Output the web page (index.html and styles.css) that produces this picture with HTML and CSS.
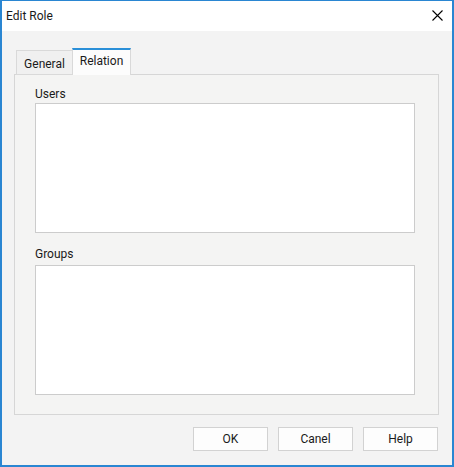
FILE: index.html
```html
<!DOCTYPE html>
<html>
<head>
<meta charset="utf-8">
<link rel="stylesheet" href="styles.css">
</head>
<body>
<div class="window">
  <div class="titlebar">
    <span class="title">Edit Role</span>
    <span class="close">
      <svg width="11" height="11" viewBox="0 0 11 11"><path d="M0.5 0.5L10.5 10.5M10.5 0.5L0.5 10.5" stroke="#000" stroke-width="1.1" fill="none"/></svg>
    </span>
  </div>
  <div class="content">
    <div class="tabs">
      <div class="tab">General</div>
      <div class="tab tab-active">Relation</div>
    </div>
    <div class="panel">
      <div class="label">Users</div>
      <div class="listbox"></div>
      <div class="label label-groups">Groups</div>
      <div class="listbox"></div>
    </div>
    <div class="buttons">
      <div class="btn">OK</div>
      <div class="btn">Canel</div>
      <div class="btn">Help</div>
    </div>
  </div>
</div>
</body>
</html>
```
FILE: styles.css
```css
html, body {
  margin: 0;
  padding: 0;
}
body {
  font-family: "Segoe UI", Roboto, "Noto Sans", sans-serif;
  font-size: 12px;
  color: #1a1a1a;
}
.window {
  box-sizing: border-box;
  width: 454px;
  height: 467px;
  border: 2px solid #2a86d2;
  border-top-width: 1px;
  background: #f3f3f3;
  display: flex;
  flex-direction: column;
}
.titlebar {
  height: 30px;
  background: #ffffff;
  display: flex;
  align-items: center;
  justify-content: space-between;
  padding-left: 4px;
}
.title {
  font-size: 12px;
  line-height: 16px;
  margin-top: -1px;
}
.close {
  width: 30px;
  height: 30px;
  display: flex;
  align-items: center;
  justify-content: center;
  margin-top: -1px;
}
.content {
  padding: 18px 13px 0 12px;
  display: flex;
  flex-direction: column;
}
.tabs {
  display: flex;
  align-items: flex-end;
  height: 26px;
  padding-left: 2px;
  margin-bottom: -1px;
  position: relative;
  z-index: 1;
}
.tab {
  box-sizing: border-box;
  height: 25px;
  width: 56px;
  border: 1px solid #d9d9d9;
  border-right: none;
  background: #f0f0f0;
  display: flex;
  align-items: center;
  justify-content: center;
  line-height: 16px;
  padding-top: 3px;
}
.tab-active {
  height: 27px;
  width: 59px;
  border: 1px solid #d9d9d9;
  border-top: 2px solid #2a8fd8;
  border-bottom: none;
  background: #fcfcfc;
  padding-top: 0;
  padding-bottom: 3px;
}
.panel {
  box-sizing: border-box;
  width: 425px;
  height: 341px;
  border: 1px solid #d6d6d6;
  background: #f4f4f3;
  padding: 11px 0 0 20px;
}
.label {
  line-height: 16px;
  margin-bottom: 1px;
}
.label-groups {
  margin-top: 13px;
  margin-bottom: 3px;
}
.listbox {
  box-sizing: border-box;
  width: 380px;
  height: 130px;
  background: #ffffff;
  border: 1px solid #cccccc;
}
.buttons {
  display: flex;
  justify-content: flex-end;
  gap: 10px;
  margin-top: 12px;
  padding-right: 1px;
}
.btn {
  box-sizing: border-box;
  width: 75px;
  height: 24px;
  background: #fdfdfd;
  border: 1px solid #d2d2d2;
  display: flex;
  align-items: center;
  justify-content: center;
  line-height: 16px;
}
```
